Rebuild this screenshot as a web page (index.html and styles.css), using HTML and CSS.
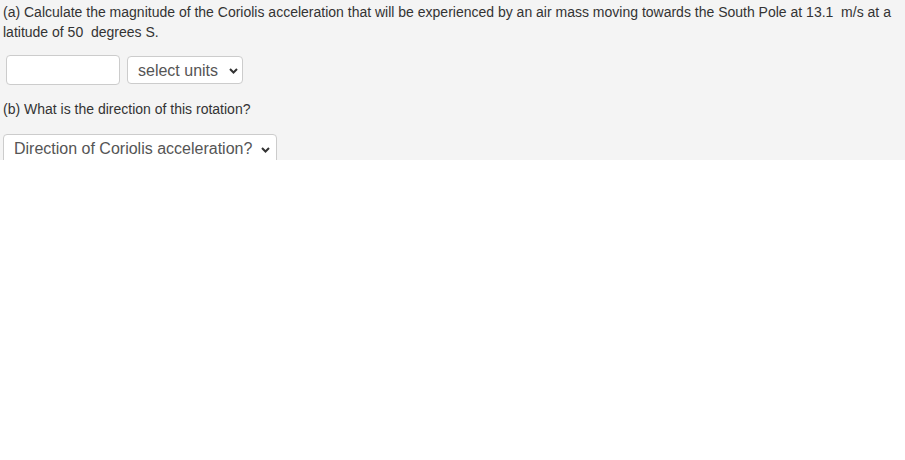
FILE: index.html
```html
<!DOCTYPE html>
<html lang="en">
<head>
    <meta charset="UTF-8">
    <meta name="viewport" content="width=device-width, initial-scale=1.0">
    <title>Coriolis acceleration</title>
    <link rel="stylesheet" href="styles.css">
</head>
<body>
    <div class="question">
        <p class="prompt">(a) Calculate the magnitude of the Coriolis acceleration that will be experienced by an air mass moving towards the South Pole at 13.1&nbsp; m/s at a latitude of 50&nbsp; degrees S.</p>

        <div class="answer-row">
            <input type="text" class="answer" aria-label="answer">
            <label class="select-wrap units">
                <select>
                    <option>select units</option>
                    <option>m/s&sup2;</option>
                </select>
                <svg class="chevron" width="9" height="6" viewBox="0 0 9 6"><path d="M1 1 L4.5 4.5 L8 1" fill="none" stroke="#333" stroke-width="2"/></svg>
            </label>
        </div>

        <p class="prompt part-b">(b) What is the direction of this rotation?</p>

        <label class="select-wrap direction">
            <select>
                <option>Direction of Coriolis acceleration?</option>
                <option>To the left</option>
                <option>To the right</option>
            </select>
            <svg class="chevron" width="9" height="6" viewBox="0 0 9 6"><path d="M1 1 L4.5 4.5 L8 1" fill="none" stroke="#333" stroke-width="2"/></svg>
        </label>
    </div>
</body>
</html>
```

FILE: styles.css
```css
body {
    margin: 0;
    font-family: "Liberation Sans", Arial, sans-serif;
    background: #fff;
}

.question {
    background-color: #f4f4f4;
    height: 160px;
    overflow: hidden;
    padding: 3px 0 0 3px;
    box-sizing: border-box;
}

.prompt {
    margin: 0;
    font-size: 14px;
    line-height: 19.5px;
    color: #333;
    padding-right: 8px;
}

.answer-row {
    display: flex;
    align-items: center;
    gap: 7px;
    margin: 13px 0 0 3px;
}

.answer {
    width: 114px;
    height: 30px;
    box-sizing: border-box;
    border: 1px solid #ccc;
    border-radius: 4px;
    background: #fff;
    padding: 0 6px;
    font-size: 14px;
    margin: 0;
}

.select-wrap {
    position: relative;
    display: inline-block;
}

.select-wrap select {
    -webkit-appearance: none;
    appearance: none;
    box-sizing: border-box;
    border: 1px solid #ccc;
    border-radius: 4px;
    background: #fff;
    color: #555;
    font-family: "Liberation Sans", Arial, sans-serif;
    font-size: 16px;
    margin: 0;
    padding: 0 0 0 10px;
    display: block;
}

.units select {
    width: 116px;
    height: 28px;
}

.units .chevron {
    position: absolute;
    left: 102px;
    top: 12px;
}

.part-b {
    margin-top: 15px;
}

.direction {
    margin-top: 14px;
}

.direction select {
    width: 274px;
    height: 30px;
    padding-left: 10px;
}

.direction .chevron {
    position: absolute;
    left: 258px;
    top: 13px;
}

.chevron {
    pointer-events: none;
}
```
